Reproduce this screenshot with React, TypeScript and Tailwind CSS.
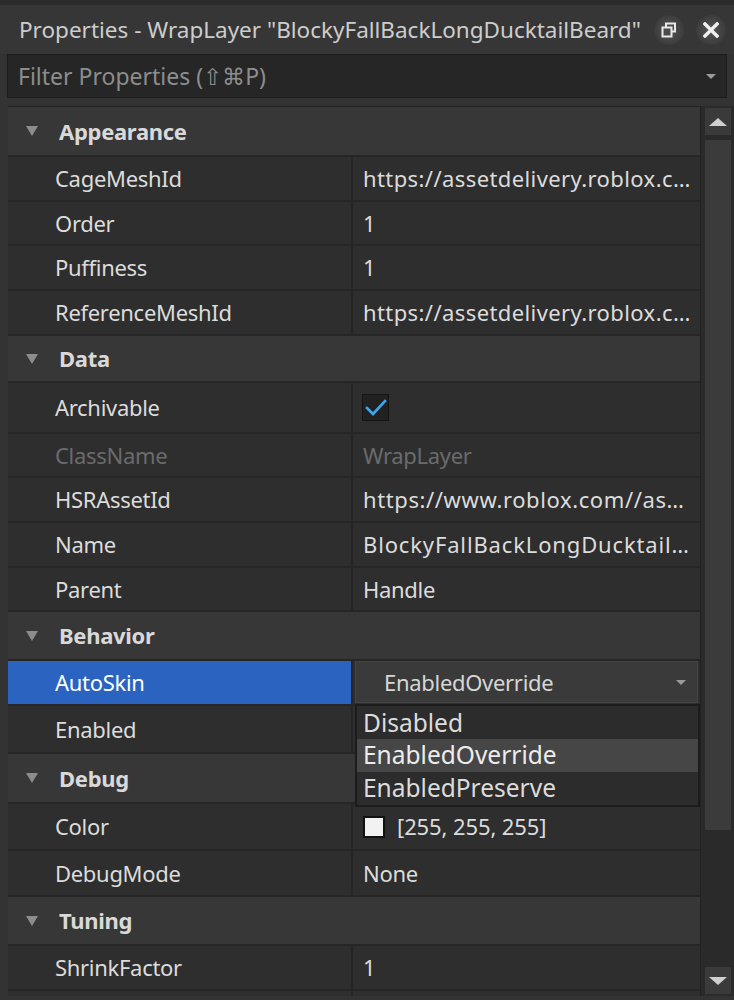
import React from "react";

type Row =
  | { kind: "header"; label: string; h: string }
  | {
      kind: "prop";
      label: string;
      value?: React.ReactNode;
      h: string;
      dim?: boolean;
      selected?: boolean;
      special?: string;
      track?: string;
    };

const rows: Row[] = [
  { kind: "header", label: "Appearance", h: "h-[50px]" },
  { kind: "prop", label: "CageMeshId", value: "https://assetdelivery.roblox.c…", h: "h-[45px]", track: "tracking-[0.4px]" },
  { kind: "prop", label: "Order", value: "1", h: "h-[44px]" },
  { kind: "prop", label: "Puffiness", value: "1", h: "h-[45px]" },
  { kind: "prop", label: "ReferenceMeshId", value: "https://assetdelivery.roblox.c…", h: "h-[45px]", track: "tracking-[0.4px]" },
  { kind: "header", label: "Data", h: "h-[47px]" },
  { kind: "prop", label: "Archivable", special: "check", h: "h-[51px]" },
  { kind: "prop", label: "ClassName", value: "WrapLayer", h: "h-[44px]", dim: true },
  { kind: "prop", label: "HSRAssetId", value: "https://www.roblox.com//as…", h: "h-[45px]", track: "tracking-[0.6px]" },
  { kind: "prop", label: "Name", value: "BlockyFallBackLongDucktail…", h: "h-[45px]", track: "tracking-[0.85px]" },
  { kind: "prop", label: "Parent", value: "Handle", h: "h-[44px]" },
  { kind: "header", label: "Behavior", h: "h-[49px]" },
  { kind: "prop", label: "AutoSkin", special: "select", h: "h-[45px]", selected: true },
  { kind: "prop", label: "Enabled", value: "", h: "h-[48px]" },
  { kind: "header", label: "Debug", h: "h-[50px]" },
  { kind: "prop", label: "Color", special: "color", h: "h-[47px]" },
  { kind: "prop", label: "DebugMode", value: "None", h: "h-[46px]" },
  { kind: "header", label: "Tuning", h: "h-[49px]" },
  { kind: "prop", label: "ShrinkFactor", value: "1", h: "h-[45px]" },
  { kind: "prop", label: "", value: "", h: "h-[45px]" },
];

function Tri() {
  return (
    <svg width="14" height="12" viewBox="0 0 14 12" className="shrink-0">
      <path d="M1 1 L13 1 L7 11 Z" fill="#8c8c8c" />
    </svg>
  );
}

function Check() {
  return (
    <div className="w-[27px] h-[27px] bg-[#212121] border border-[#151515] flex items-center justify-center">
      <svg width="22" height="18" viewBox="0 0 22 18">
        <path d="M2 9 L8 15 L20 2" stroke="#3ba7f0" strokeWidth="2.6" fill="none" strokeLinecap="square" />
      </svg>
    </div>
  );
}

function Value({ r }: { r: Extract<Row, { kind: "prop" }> }) {
  if (r.special === "check") {
    return (
      <div className="pl-[9px] flex items-center h-full">
        <Check />
      </div>
    );
  }
  if (r.special === "color") {
    return (
      <div className="pl-[10px] flex items-center h-full gap-[12px]">
        <div className="w-[22px] h-[22px] bg-[#f2f2f2] border-2 border-[#111]" />
        <span className="tracking-[-0.1px]">[255, 255, 255]</span>
      </div>
    );
  }
  if (r.special === "select") {
    return (
      <div className="h-full pl-[2px] pr-[2px] pb-[1px]">
        <div className="h-full bg-[#3a3a3a] border border-[#444] flex items-center pl-[28px] pr-[10px] justify-between">
          <span className="text-[#d6d6d6]">EnabledOverride</span>
          <svg width="12" height="8" viewBox="0 0 12 8">
            <path d="M1 2 L11 2 L6 7 Z" fill="#9a9a9a" />
          </svg>
        </div>
      </div>
    );
  }
  return (
    <div
      className={`pl-[10px] flex items-center h-full whitespace-nowrap overflow-hidden ${r.track ?? ""} ${
        r.dim ? "text-[#6b6b6b]" : ""
      }`}
    >
      {r.value}
    </div>
  );
}

export default function App() {
  return (
    <div
      className="w-[734px] h-[1000px] bg-[#333333] overflow-hidden text-[#dcdcdc] flex flex-col"
      style={{ fontFamily: "'Noto Sans', Lato, sans-serif" }}
    >
      {/* Title bar */}
      <div className="h-[54px] shrink-0 bg-[#363636] border-t-[5px] border-[#2b2b2b] flex items-center pl-[19px] pr-[8px]">
        <div className="text-[22.5px] text-[#cdcdcd] whitespace-nowrap flex-1 overflow-hidden">
          Properties - WrapLayer "BlockyFallBackLongDucktailBeard"
        </div>
        <div className="flex items-center gap-[12px] ml-[6px]">
          <div className="w-[30px] h-[30px] rounded-full bg-[radial-gradient(circle,#555555_0%,#3c3c3c_70%,#363636_100%)] flex items-center justify-center">
            <svg width="16" height="16" viewBox="0 0 16 16">
              <rect x="5" y="1.5" width="9" height="8" fill="none" stroke="#e8e8e8" strokeWidth="2" />
              <rect x="1.5" y="5.5" width="9" height="9" fill="#4a4a4a" stroke="#e8e8e8" strokeWidth="2" />
            </svg>
          </div>
          <div className="w-[30px] h-[30px] rounded-full bg-[radial-gradient(circle,#555555_0%,#3c3c3c_70%,#363636_100%)] flex items-center justify-center">
            <svg width="16" height="16" viewBox="0 0 16 16">
              <path d="M2 2 L14 14 M14 2 L2 14" stroke="#f0f0f0" strokeWidth="3.4" strokeLinecap="square" />
            </svg>
          </div>
        </div>
      </div>

      {/* Filter */}
      <div className="px-[7px] shrink-0">
        <div className="h-[44px] bg-[#262626] border border-[#1c1c1c] flex items-center pl-[10px] pr-[10px] justify-between">
          <span className="text-[23px] text-[#8d8d8d]">Filter Properties (⇧⌘P)</span>
          <svg width="10" height="7" viewBox="0 0 10 7">
            <path d="M0 1 L10 1 L5 6 Z" fill="#9a9a9a" />
          </svg>
        </div>
      </div>

      {/* Main */}
      <div className="h-[902px] shrink-0 flex items-start pt-[8px] pl-[8px] relative">
        <div className="w-[692px] h-[890px] overflow-hidden shrink-0 flex flex-col border-t border-[#222] text-[22px] tracking-[-0.3px]">
          {rows.map((r, i) =>
            r.kind === "header" ? (
              <div key={i} className={`${r.h} shrink-0 bg-[#373737] border-b-2 border-[#262626] flex items-center pl-[17px]`}>
                <Tri />
                <span className="ml-[20px] font-bold text-[#d9d9d9]">{r.label}</span>
              </div>
            ) : (
              <div key={i} className={`${r.h} shrink-0 flex border-b-2 border-[#262626] bg-[#2e2e2e]`}>
                <div
                  className={`w-[345px] shrink-0 border-r-2 border-[#262626] flex items-center pl-[47px] ${
                    r.selected ? "bg-[#2a63c0] text-white" : r.dim ? "text-[#6b6b6b]" : ""
                  }`}
                >
                  {r.label}
                </div>
                <div className="flex-1 min-w-0">
                  <Value r={r} />
                </div>
              </div>
            )
          )}
        </div>

        {/* Scrollbar */}
        <div className="w-[34px] h-[890px] shrink-0 bg-[#2a2a2a] border-l border-[#222] flex flex-col items-center pt-[1px] pb-[1px] gap-[3px]">
          <div className="w-[28px] h-[29px] shrink-0 bg-[#3a3a3a] border border-[#2a2a2a] flex items-center justify-center">
            <svg width="18" height="10" viewBox="0 0 18 10">
              <path d="M0 9 L18 9 L9 1 Z" fill="#cfcfcf" />
            </svg>
          </div>
          <div className="w-[28px] h-[692px] shrink-0 bg-[#3b3b3b] border border-[#2a2a2a]" />
          <div className="flex-1" />
          <div className="w-[28px] h-[29px] shrink-0 bg-[#3a3a3a] border border-[#2a2a2a] flex items-center justify-center">
            <svg width="18" height="10" viewBox="0 0 18 10">
              <path d="M0 1 L18 1 L9 9 Z" fill="#cfcfcf" />
            </svg>
          </div>
        </div>

        {/* Dropdown popup */}
        <div className="absolute left-[355px] top-[606px] w-[345px] bg-[#2c2c2c] border-2 border-[#1c1c1c] flex flex-col text-[24.5px] py-[1px]">
          <div className="h-[32px] flex items-center pl-[6px] text-[#dcdcdc]">Disabled</div>
          <div className="h-[33px] flex items-center pl-[6px] bg-[#464646] text-[#ececec]">EnabledOverride</div>
          <div className="h-[32px] flex items-center pl-[6px] text-[#dcdcdc]">EnabledPreserve</div>
        </div>
      </div>
    </div>
  );
}
